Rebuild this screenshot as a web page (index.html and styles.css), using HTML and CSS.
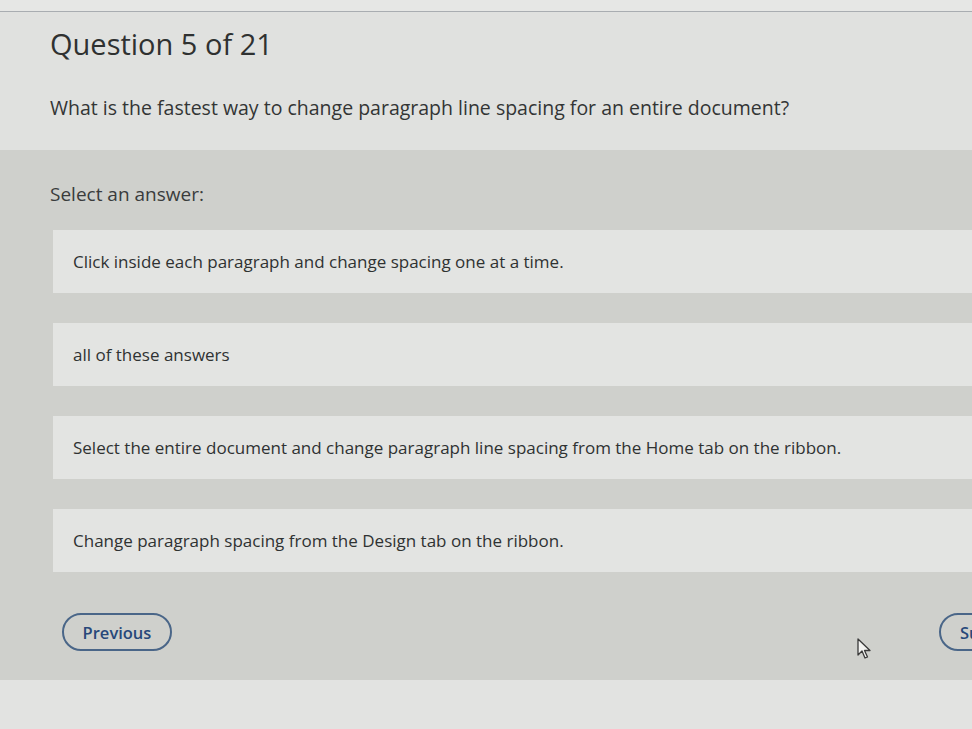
FILE: index.html
```html
<!DOCTYPE html>
<html>
<head>
<meta charset="utf-8">
<link rel="stylesheet" href="styles.css">
</head>
<body>
<div class="topbar"></div>
<header class="header">
  <h1 class="title">Question 5 of 21</h1>
  <p class="question">What is the fastest way to change paragraph line spacing for an entire document?</p>
</header>
<main class="main">
  <p class="prompt">Select an answer:</p>
  <div class="answers">
    <div class="answer">Click inside each paragraph and change spacing one at a time.</div>
    <div class="answer">all of these answers</div>
    <div class="answer">Select the entire document and change paragraph line spacing from the Home tab on the ribbon.</div>
    <div class="answer">Change paragraph spacing from the Design tab on the ribbon.</div>
  </div>
  <div class="nav">
    <button class="btn">Previous</button>
    <button class="btn btn-right">Submit</button>
  </div>
  <svg class="cursor" width="16" height="22" viewBox="0 0 16 22">
    <path d="M1 1 L1 17 L5 13 L8 20 L10.5 19 L7.5 12.5 L13 12.5 Z" fill="#f4f4f2" stroke="#3a3a3a" stroke-width="1.3" stroke-linejoin="round"/>
  </svg>
</main>
<footer class="footer"></footer>
</body>
</html>
```
FILE: styles.css
```css
* { box-sizing: border-box; }
html, body { margin: 0; padding: 0; }
body {
  width: 972px;
  height: 729px;
  overflow: hidden;
  font-family: "Open Sans", "Noto Sans", "Liberation Sans", sans-serif;
  color: #333535;
  background: #e2e3e1;
}
.topbar {
  height: 12px;
  background: #e6e7e5;
  border-bottom: 1px solid #a9adb1;
}
.header {
  height: 138px;
  background: #e0e1df;
  padding: 12px 0 0 50px;
}
.title {
  margin: 0;
  font-size: 29px;
  font-weight: 400;
  line-height: 40px;
  color: #2f3131;
}
.question {
  margin: 30px 0 0 0;
  font-size: 19.5px;
  line-height: 28px;
  color: #333535;
}
.main {
  position: relative;
  height: 530px;
  background: #cfd0cc;
  padding: 30px 0 0 50px;
}
.prompt {
  margin: 0;
  font-size: 19px;
  line-height: 28px;
  color: #3a3c3c;
}
.answers {
  margin-top: 22px;
  padding-left: 3px;
  display: flex;
  flex-direction: column;
  gap: 30px;
}
.answer {
  height: 63px;
  background: #e3e4e2;
  display: flex;
  align-items: center;
  padding-left: 20px;
  font-size: 17px;
  color: #2f3232;
}
.nav {
  margin-top: 41px;
  display: flex;
  justify-content: space-between;
  padding-left: 12px;
}
.btn {
  height: 38px;
  width: 110px;
  border: 2px solid #4a6688;
  border-radius: 19px;
  background: transparent;
  color: #27487a;
  font-family: "Open Sans", "Noto Sans", sans-serif;
  font-weight: 600;
  font-size: 16.5px;
  padding: 0;
}
.btn-right {
  margin-right: -77px;
  text-align: left;
  padding-left: 19px;
}
.cursor {
  position: absolute;
  left: 857px;
  top: 488px;
}
.footer {
  height: 49px;
  background: #e2e3e1;
}
```
